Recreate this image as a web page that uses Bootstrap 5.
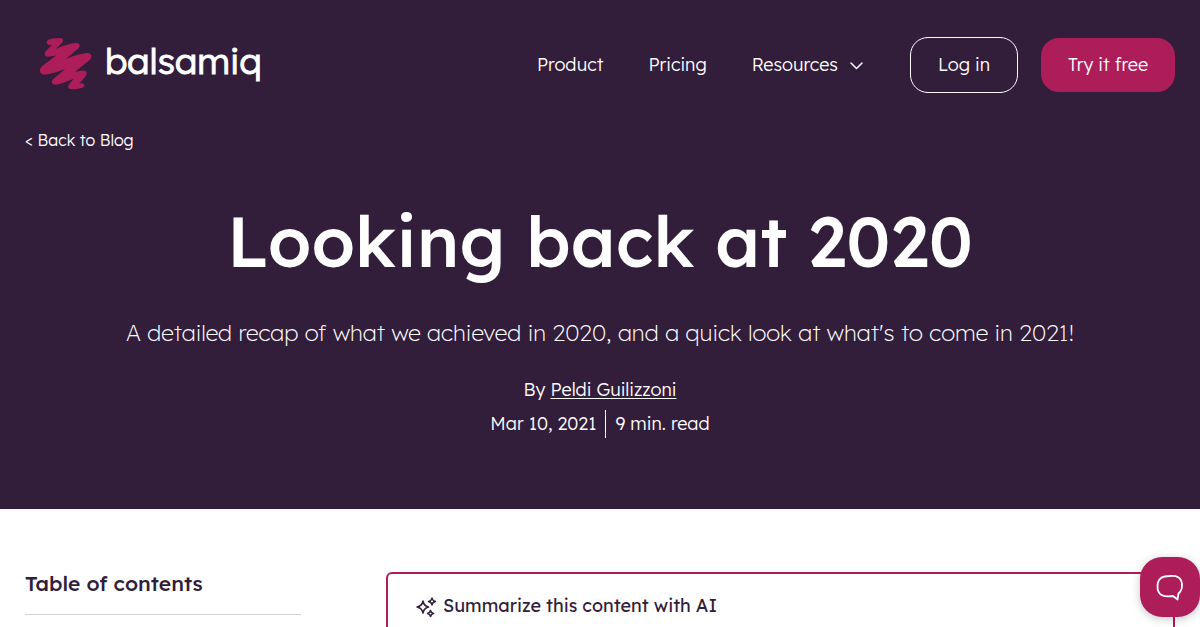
<!DOCTYPE html>
<html lang="en">
<head>
<meta charset="utf-8">
<meta name="viewport" content="width=device-width, initial-scale=1">
<title>Looking back at 2020 | Balsamiq</title>
<link href="https://cdn.jsdelivr.net/npm/bootstrap@5.3.0/dist/css/bootstrap.min.css" rel="stylesheet">
<style>
  :root { --plum: #321d3b; --berry: #ad1d5a; }
  body { font-family: Lexend, Inter, "Noto Sans", sans-serif; font-weight: 300; font-size: 18px; line-height: 28px; color: var(--plum); }
  .edge { padding-left: 25px; padding-right: 25px; }
  .hero { background: var(--plum); color: #fff; padding-bottom: 71px; }
  .hero a { color: #fff; }
  .site-bar { padding-top: 36px; padding-bottom: 35px; }
  .brand { gap: 12px; padding: 0 0 0 13px; margin: 0; }
  .brand svg { margin-bottom: 2px; }
  .wordmark { font-size: 36px; line-height: 44px; font-weight: 300; padding-bottom: 8px; -webkit-text-stroke: 1px #fff; }
  .menu { gap: 45px; margin-right: 44px; }
  .actions { gap: 23px; }
  .pill { font-size: 18px; line-height: 28px; font-weight: 300; color: #fff; border-radius: 18px; padding: 13px 26px; }
  .pill:hover { color: #fff; }
  .pill-line { width: 108px; border: 1px solid #fff; }
  .pill-fill { width: 134px; border: 0; background: var(--berry); }
  .back { font-size: 16px; line-height: 24px; }
  .headline { font-size: 70px; line-height: 88px; font-weight: 500; margin: 45px 0 0; }
  .deck { font-size: 23px; line-height: 36px; font-weight: 240; margin: 30px 0 0; }
  .byline { margin-top: 25px; }
  .byline a { text-underline-offset: 2px; text-decoration-thickness: 1px; }
  .meta { margin-top: 6px; }
  .meta time { border-right: 1px solid #fff; padding-right: 9px; margin-right: 9px; }
  .below { padding-top: 63px; }
  .toc { width: 24%; }
  .toc h2 { font-size: 21px; line-height: 22px; font-weight: 500; margin: 0; padding-bottom: 20px; border-bottom: 1px solid #d3d3d3; }
  .article { margin-left: 85px; }
  .ai-box { border: 2px solid var(--berry); border-radius: 6px; padding: 18px 28px; gap: 5px; font-weight: 400; min-height: 120px; }
  .chat { right: 0; bottom: 10px; width: 60px; height: 60px; border: 0; border-radius: 22px; background: var(--berry); box-shadow: 0 2px 10px rgba(0,0,0,.22); z-index: 10; }
</style>
</head>
<body>
<header class="hero">
  <nav class="site-bar edge d-flex align-items-center">
    <a class="brand navbar-brand d-flex align-items-center me-auto" href="#">
      <svg width="55" height="55" viewBox="40 35 165 165" aria-hidden="true">
        <path fill="#ad1d5a" d="M66 53C66 44 85 42 105 41C118 41 117 50 112 56L93 74C110 66 135 58 152 56C167 55 168 66 160 73L124 104C145 95 170 87 188 86C203 87 203 100 195 107L151 142L171 139C188 137 189 148 182 157L163 179L170 177C181 176 182 187 173 190C160 193 150 195 140 195C130 194 128 186 134 179L147 163C130 170 110 178 95 181C80 182 79 171 86 164L121 134C100 143 75 150 59 151C43 149 42 135 52 126L95 93C80 97 72 98 66 97C58 93 59 86 64 80L82 62L75 62C69 62 66 58 66 53Z"/>
      </svg>
      <span class="wordmark">balsamiq</span>
    </a>
    <div class="menu d-flex">
      <a class="text-decoration-none" href="#">Product</a>
      <a class="text-decoration-none" href="#">Pricing</a>
      <a class="text-decoration-none d-flex align-items-center gap-2" href="#">Resources
        <svg width="20" height="20" viewBox="0 0 20 20" fill="none" stroke="#fff" stroke-width="1.5" stroke-linecap="round" stroke-linejoin="round" aria-hidden="true"><path d="M5 8l5.500 5.500L16 8"/></svg>
      </a>
    </div>
    <div class="actions d-flex align-items-center">
      <button class="btn pill pill-line" type="button">Log in</button>
      <button class="btn pill pill-fill text-nowrap" type="button">Try it free</button>
    </div>
  </nav>
  <div class="edge">
    <a class="back d-block text-decoration-none" href="#">&lt; Back to Blog</a>
    <div class="text-center">
      <h1 class="headline">Looking back at 2020</h1>
      <p class="deck">A detailed recap of what we achieved in 2020, and a quick look at what's to come in 2021!</p>
      <div class="byline">By <a href="#">Peldi Guilizzoni</a></div>
      <div class="meta d-flex justify-content-center"><time datetime="2021-03-10">Mar 10, 2021</time><span>9 min. read</span></div>
    </div>
  </div>
</header>
<main class="below edge d-flex align-items-start">
  <aside class="toc flex-shrink-0"><h2>Table of contents</h2></aside>
  <article class="article flex-grow-1">
    <section class="ai-box d-flex align-items-start">
      <svg width="22" height="32" viewBox="0 0 22 32" fill="none" stroke="#321d3b" stroke-width="1.500" stroke-linejoin="round" aria-hidden="true">
        <path d="M7 9Q8 14 12.500 15Q8 16 7 21Q6 16 1 15Q6 14 7 9Z"/>
        <path d="M16 6Q16.500 9 19.500 9.500Q16.500 10 16 13Q15.500 10 12.500 9.500Q15.500 9 16 6Z"/>
        <path d="M14.500 18.500Q15 21 17.500 21.500Q15 22 14.500 24.500Q14 22 11.500 21.500Q14 21 14.500 18.500Z"/>
      </svg>
      <span>Summarize this content with AI</span>
    </section>
  </article>
</main>
<button class="chat position-fixed d-flex align-items-center justify-content-center p-0" type="button" aria-label="Open chat">
  <svg width="28" height="28" viewBox="0 0 28 28" fill="none" stroke="#fff" stroke-width="1.800" stroke-linejoin="round" aria-hidden="true"><path d="M13.500 3C20 2.500 26 3.500 26 12.500C26 16 25 18.500 22.500 20.500L21.500 26.500C20 25.500 18.500 24 17 23C7 24.500 1.500 22 1.500 13.500C1.500 5.500 6 3 13.500 3Z"/></svg>
</button>
<script src="https://cdn.jsdelivr.net/npm/bootstrap@5.3.0/dist/js/bootstrap.bundle.min.js"></script>
</body>
</html>
